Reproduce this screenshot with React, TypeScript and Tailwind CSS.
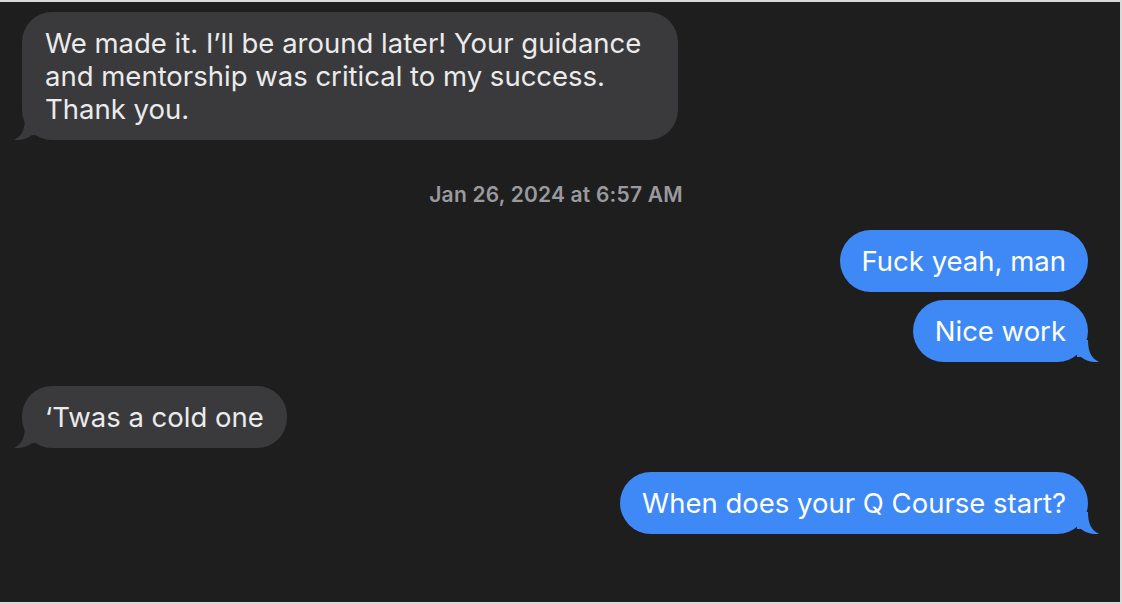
import React from "react";

const font = { fontFamily: "Inter, 'Noto Sans', 'Liberation Sans', sans-serif" };

function TailRight({ color }: { color: string }) {
  return (
    <svg
      className="absolute bottom-0 right-[-11px]"
      width="22"
      height="22"
      viewBox="0 0 22 22"
    >
      <path
        d="M0 0 L11 0 C11 11 14 18 22 22 C15 22.5 9 21 4 17 L0 17 Z"
        fill={color}
      />
    </svg>
  );
}

function TailLeft({ color }: { color: string }) {
  return (
    <svg
      className="absolute bottom-0 left-[-8px]"
      width="22"
      height="22"
      viewBox="0 0 22 22"
    >
      <path
        d="M22 0 L11 0 C11 11 8 18 0 22 C7 22.5 13 21 18 17 L22 17 Z"
        fill={color}
      />
    </svg>
  );
}

function Incoming({ children }: { children: React.ReactNode }) {
  return (
    <div className="flex justify-start pl-[22px]">
      <div className="relative">
        <div className="relative z-10 rounded-[30px] bg-[#3a3a3c] px-[23px] py-[14.5px] text-[27.5px] leading-[33px] text-[#ebebeb]">
          {children}
        </div>
        <TailLeft color="#3a3a3c" />
      </div>
    </div>
  );
}

function Outgoing({ children, tail }: { children: React.ReactNode; tail?: boolean }) {
  return (
    <div className="flex justify-end pr-[32px]">
      <div className="relative">
        <div className="relative z-10 rounded-[31px] bg-[#3e89f6] px-[22px] py-[14.5px] text-[27.5px] leading-[33px] text-white">
          {children}
        </div>
        {tail && <TailRight color="#3e89f6" />}
      </div>
    </div>
  );
}

export default function App() {
  return (
    <div
      className="h-[604px] w-[1122px] overflow-hidden border-t-2 border-r-2 border-b-2 border-[#d9d9d9] bg-[#1e1e1e]"
      style={font}
    >
      <div className="flex flex-col pt-[10px]">
        <Incoming>
          <div className="w-[610px]">
            We made it. I’ll be around later! Your guidance and mentorship was critical to my success. Thank you.
          </div>
        </Incoming>
        <div className="mt-[42px] mb-[22px] flex justify-center pr-[8px] text-[21px] font-semibold leading-[26px] tracking-[0.2px] text-[#9a9a9e]">
          Jan 26, 2024 at 6:57 AM
        </div>
        <Outgoing>Fuck yeah, man</Outgoing>
        <div className="h-[8px]" />
        <Outgoing tail>Nice work</Outgoing>
        <div className="h-[24px]" />
        <Incoming>‘Twas a cold one</Incoming>
        <div className="h-[24px]" />
        <Outgoing tail>When does your Q Course start?</Outgoing>
      </div>
    </div>
  );
}
